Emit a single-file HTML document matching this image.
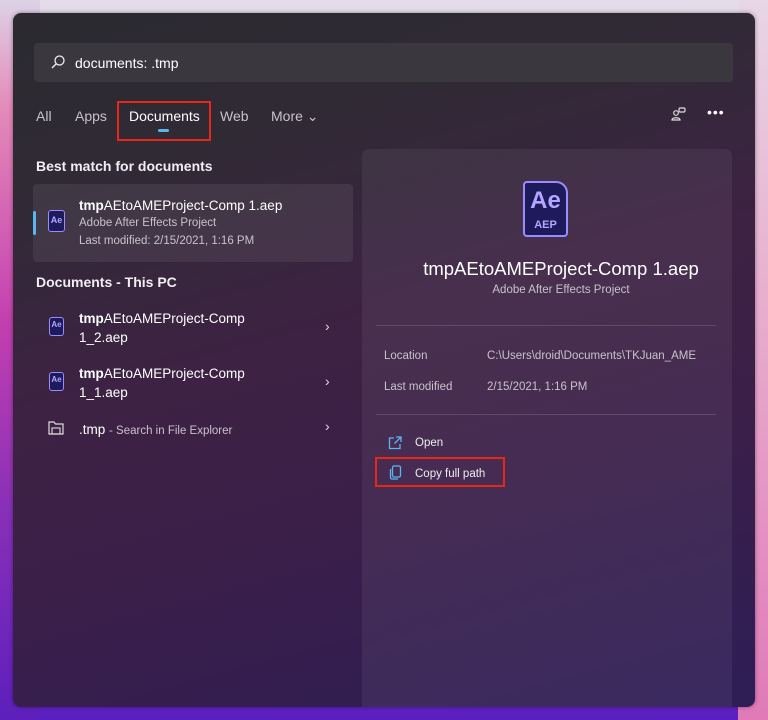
<!DOCTYPE html>
<html><head><meta charset="utf-8"><style>
*{margin:0;padding:0;box-sizing:border-box}
body{width:768px;height:720px;overflow:hidden;font-family:"Liberation Sans",sans-serif;position:relative;
background:linear-gradient(180deg,#e4dcea 0%,#d9c3dc 25%,#c25fb3 50%,#7b2cc4 85%,#5a1fc0 100%);}
.bgl{position:absolute;left:0;top:0;width:40px;height:720px;background:linear-gradient(180deg,#dcd2e6 0%,#e48ab8 15%,#c33fb0 45%,#8a30b8 70%,#5d1fbd 100%)}
.bgr{position:absolute;right:0;top:0;width:30px;height:720px;background:linear-gradient(180deg,#e7d6e6 0%,#e8b0cf 40%,#e07ab8 100%)}
.win{position:absolute;left:13px;top:13px;width:742px;height:694px;border-radius:8px;overflow:hidden;
background:linear-gradient(165deg,#2b2a30 0%,#302a35 20%,#3d2243 45%,#3b1f48 65%,#2e1d56 100%);box-shadow:0 0 4px rgba(0,0,0,.4)}
.t{position:absolute;color:#fff;white-space:nowrap}
.search{position:absolute;left:21px;top:30px;width:699px;height:39px;background:#3b373f;border-radius:4px}
.right{position:absolute;left:349px;top:136px;width:370px;height:580px;background:rgba(255,255,255,.06);border-radius:7px;z-index:1}
.best{position:absolute;left:20px;top:171px;width:320px;height:78px;background:rgba(255,255,255,.07);border-radius:4px}
.red{position:absolute;border:2.5px solid #e8261a;z-index:3}
.hr{position:absolute;left:363px;width:340px;height:1px;background:rgba(255,255,255,.14);z-index:2}
.ae{position:absolute;background:#1e1b5c;border:1.5px solid #9a8cff;border-radius:3px;color:#b3a6ff;font-weight:bold;text-align:center}
.chev{position:absolute;color:#ddd;font-size:14px}
.g{color:#c9c2cc}
</style></head><body>
<div class="bgl"></div><div class="bgr"></div>
<div class="win">
 <div class="search"></div>
 <svg style="position:absolute;left:37px;top:41px" width="16" height="16" viewBox="0 0 16 16"><circle cx="9.5" cy="6.5" r="4.5" fill="none" stroke="#eee" stroke-width="1.3"/><path d="M6.3 9.7 2 14" stroke="#eee" stroke-width="1.4"/></svg>
 <div class="t" style="left:62px;top:42px;font-size:14px">documents: .tmp</div>
 <div class="t g" style="left:23px;top:95px;font-size:14px">All</div>
 <div class="t g" style="left:62px;top:95px;font-size:14px">Apps</div>
 <div class="t" style="left:116px;top:95px;font-size:14px">Documents</div>
 <div style="position:absolute;left:145px;top:116px;width:11px;height:3px;border-radius:2px;background:#5bb5f0"></div>
 <div class="t g" style="left:207px;top:95px;font-size:14px">Web</div>
 <div class="t g" style="left:258px;top:95px;font-size:14px">More ⌄</div>
 <svg style="position:absolute;left:657px;top:93px" width="18" height="16" viewBox="0 0 18 16"><circle cx="6" cy="7" r="2.3" fill="none" stroke="#ddd" stroke-width="1.2"/><path d="M2 14c0-3 8-3 8 0z" fill="none" stroke="#ddd" stroke-width="1.2"/><rect x="9" y="2" width="6" height="4" rx="1.2" fill="none" stroke="#ddd" stroke-width="1.2"/></svg>
 <div class="t" style="left:694px;top:91px;font-size:14px;letter-spacing:1px">•••</div>
 <div class="red" style="left:104px;top:88px;width:94px;height:40px"></div>

 <div class="t" style="left:23px;top:145px;font-size:14px;font-weight:bold;color:#f0eef2">Best match for documents</div>
 <div class="best"></div>
 <div style="position:absolute;left:20px;top:198px;width:3px;height:24px;border-radius:2px;background:#5bb5f0"></div>
 <div class="ae" style="left:35px;top:197px;width:17px;height:22px;font-size:9px;line-height:18px">Ae</div>
 <div class="t" style="left:66px;top:185px;font-size:13.5px"><b>tmp</b>AEtoAMEProject-Comp 1.aep</div>
 <div class="t g" style="left:66px;top:204px;font-size:11.5px">Adobe After Effects Project</div>
 <div class="t g" style="left:66px;top:222px;font-size:11.5px">Last modified: 2/15/2021, 1:16 PM</div>

 <div class="t" style="left:23px;top:261px;font-size:14px;font-weight:bold;color:#f0eef2">Documents - This PC</div>
 <div class="ae" style="left:36px;top:304px;width:15px;height:19px;font-size:8px;line-height:14px">Ae</div>
 <div class="t" style="left:66px;top:296px;font-size:13.5px;line-height:19px"><b>tmp</b>AEtoAMEProject-Comp<br>1_2.aep</div>
 <div class="chev" style="left:312px;top:305px">›</div>
 <div class="ae" style="left:36px;top:359px;width:15px;height:19px;font-size:8px;line-height:14px">Ae</div>
 <div class="t" style="left:66px;top:351px;font-size:13.5px;line-height:19px"><b>tmp</b>AEtoAMEProject-Comp<br>1_1.aep</div>
 <div class="chev" style="left:312px;top:360px">›</div>
 <svg style="position:absolute;left:35px;top:408px" width="16" height="14" viewBox="0 0 16 14"><path d="M1 1h5l1.5 2H15v10H1z" fill="none" stroke="#ddd" stroke-width="1.2"/><rect x="4" y="7" width="8" height="6" fill="none" stroke="#ddd" stroke-width="1.1"/></svg>
 <div class="t" style="left:66px;top:409px;font-size:13.5px">.tmp <span class="g" style="font-size:11.5px">- Search in File Explorer</span></div>
 <div class="chev" style="left:312px;top:405px">›</div>

 <div class="right"></div>
 <div class="ae" style="left:510px;top:168px;width:45px;height:56px;font-size:24px;line-height:36px;z-index:2;border-width:2px;border-radius:4px 12px 4px 4px">Ae<div style="font-size:11px;line-height:12px">AEP</div></div>
 <div class="t" style="left:362px;top:245px;width:372px;text-align:center;font-size:18.5px;z-index:2">tmpAEtoAMEProject-Comp 1.aep</div>
 <div class="t g" style="left:362px;top:271px;width:372px;text-align:center;font-size:11.5px;z-index:2">Adobe After Effects Project</div>
 <div class="hr" style="top:312px"></div>
 <div class="t g" style="left:371px;top:337px;font-size:11.5px;z-index:2">Location</div>
 <div class="t g" style="left:474px;top:337px;font-size:11.5px;z-index:2">C:\Users\droid\Documents\TKJuan_AME</div>
 <div class="t g" style="left:371px;top:368px;font-size:11.5px;z-index:2">Last modified</div>
 <div class="t g" style="left:474px;top:368px;font-size:11.5px;z-index:2">2/15/2021, 1:16 PM</div>
 <div class="hr" style="top:401px"></div>
 <svg style="position:absolute;left:375px;top:423px;z-index:2" width="14" height="14" viewBox="0 0 14 14"><path d="M6 2H1.5v10.5H12V8M8 1h5v5M13 1 6.5 7.5" fill="none" stroke="#5bb5f0" stroke-width="1.3"/></svg>
 <div class="t" style="left:402px;top:424px;font-size:11.5px;z-index:2;color:#eee">Open</div>
 <svg style="position:absolute;left:376px;top:452px;z-index:2" width="13" height="15" viewBox="0 0 13 15"><rect x="3.5" y="1" width="8" height="11" rx="1.5" fill="none" stroke="#5bb5f0" stroke-width="1.3"/><path d="M1.5 4v8.5a1.5 1.5 0 0 0 1.5 1.5h6" fill="none" stroke="#5bb5f0" stroke-width="1.3"/></svg>
 <div class="t" style="left:402px;top:455px;font-size:11.5px;z-index:2;color:#eee">Copy full path</div>
 <div class="red" style="left:362px;top:444px;width:130px;height:30px"></div>
</div>
</body></html>
